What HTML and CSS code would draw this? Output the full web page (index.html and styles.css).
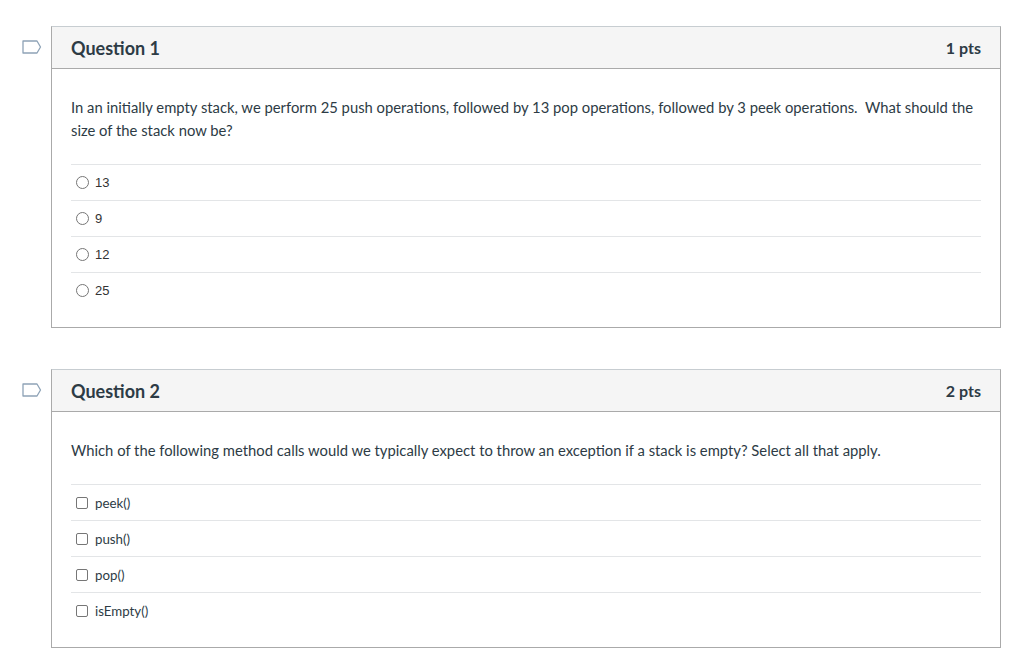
FILE: index.html
```html
<!DOCTYPE html>
<html lang="en">
<head>
    <meta charset="UTF-8">
    <title>Quiz</title>
    <link rel="stylesheet" href="styles.css">
</head>
<body>
    <div class="quiz">

        <div class="question">
            <div class="flag">
                <svg width="20" height="14" viewBox="0 0 20 14"><path d="M1 1 H15 L18.5 7 L15 13 H1 Z" fill="none" stroke="#8ea3b7" stroke-width="1.3" stroke-linejoin="round"/></svg>
            </div>
            <div class="card">
                <div class="card-head">
                    <span class="title">Question 1</span>
                    <span class="pts">1 pts</span>
                </div>
                <div class="card-body">
                    <p class="text">In an initially empty stack, we perform 25 push operations, followed by 13 pop operations, followed by 3 peek operations.&nbsp; What should the size of the stack now be?</p>
                    <div class="answers plain">
                        <label class="answer"><span class="radio"></span>13</label>
                        <label class="answer"><span class="radio"></span>9</label>
                        <label class="answer"><span class="radio"></span>12</label>
                        <label class="answer"><span class="radio"></span>25</label>
                    </div>
                </div>
            </div>
        </div>

        <div class="question">
            <div class="flag">
                <svg width="20" height="14" viewBox="0 0 20 14"><path d="M1 1 H15 L18.5 7 L15 13 H1 Z" fill="none" stroke="#8ea3b7" stroke-width="1.3" stroke-linejoin="round"/></svg>
            </div>
            <div class="card">
                <div class="card-head">
                    <span class="title">Question 2</span>
                    <span class="pts">2 pts</span>
                </div>
                <div class="card-body">
                    <p class="text">Which of the following method calls would we typically expect to throw an exception if a stack is empty? Select all that apply.</p>
                    <div class="answers">
                        <label class="answer"><span class="check"></span>peek()</label>
                        <label class="answer"><span class="check"></span>push()</label>
                        <label class="answer"><span class="check"></span>pop()</label>
                        <label class="answer"><span class="check"></span>isEmpty()</label>
                    </div>
                </div>
            </div>
        </div>

    </div>
</body>
</html>
```

FILE: styles.css
```css
body {
    margin: 0;
    padding: 0;
    background-color: #fff;
    font-family: 'Lato', 'Liberation Sans', sans-serif;
    color: #2d3b45;
}

.quiz {
    display: flex;
    flex-direction: column;
    gap: 41px;
    padding-top: 26px;
    width: 1001px;
}

.question {
    display: flex;
}

.flag {
    width: 51px;
    height: 42px;
    display: flex;
    align-items: center;
    justify-content: flex-start;
    padding-left: 22px;
    box-sizing: border-box;
}

.card {
    flex: 1;
    border: 1px solid #c7cdd1;
    border-left-color: #aaa;
    border-right-color: #aaa;
    border-bottom-color: #aaa;
}

.card-head {
    display: flex;
    justify-content: space-between;
    align-items: center;
    height: 41px;
    padding: 0 19px 0 19px;
    background-color: #f5f5f5;
    border-bottom: 1px solid #aaa;
}

.title {
    font-size: 18px;
    font-weight: bold;
}

.pts {
    font-size: 16px;
    font-weight: bold;
}

.card-body {
    padding: 27px 19px 19px 19px;
}

.text {
    margin: 0 0 22px 0;
    font-size: 14.8px;
    line-height: 23px;
}

.answer {
    display: flex;
    align-items: center;
    height: 35px;
    border-top: 1px solid #e3e5e7;
    padding-left: 5px;
    font-size: 13.3px;
}

.plain .answer {
    font-family: 'Liberation Sans', Arial, sans-serif;
    font-size: 13px;
    color: #333;
}

.radio {
    width: 11px;
    height: 11px;
    border: 1px solid #767676;
    border-radius: 50%;
    margin-right: 6px;
}

.check {
    width: 10px;
    height: 10px;
    border: 1px solid #767676;
    border-radius: 2px;
    margin-right: 7px;
}
```
